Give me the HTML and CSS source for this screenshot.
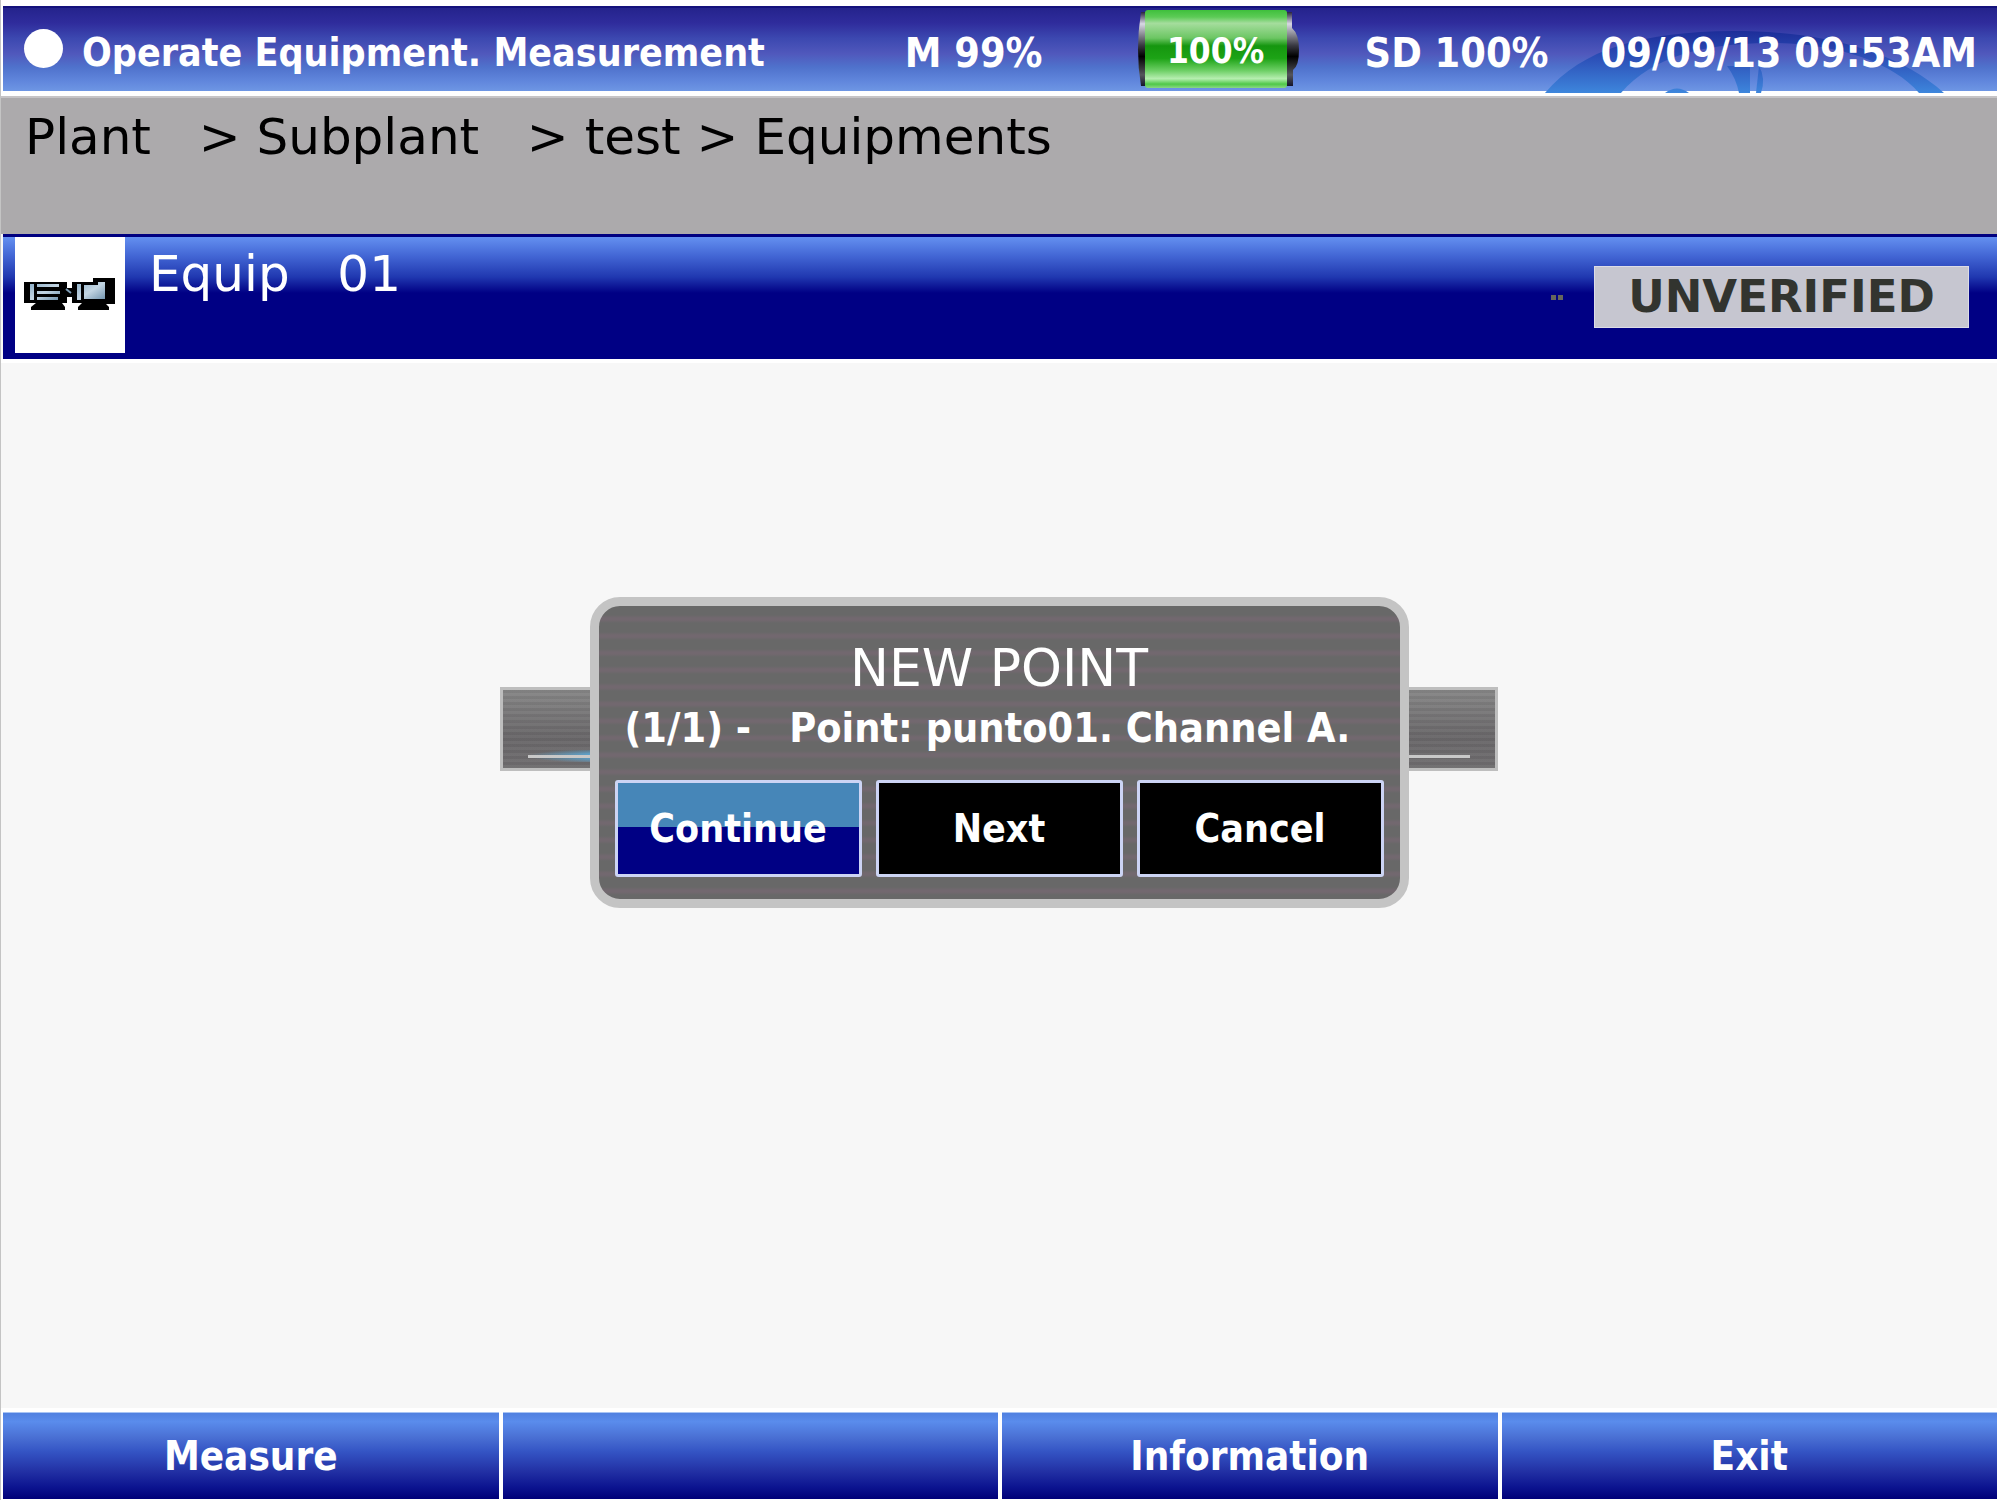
FILE: index.html
```html
<!DOCTYPE html>
<html lang="en">
<head>
<meta charset="utf-8">
<meta name="viewport" content="width=device-width, initial-scale=1">
<title>Operate Equipment. Measurement</title>
<link rel="stylesheet" href="styles.css">
</head>
<body>
<header class="status">
  <svg class="status-arc" viewBox="0 0 410 87" aria-hidden="true">
    <defs>
      <linearGradient id="arc" x1="0" y1="0" x2="0" y2="87" gradientUnits="userSpaceOnUse">
        <stop offset=".28" stop-color="#1c2c98"/>
        <stop offset=".6" stop-color="#2c50b8"/>
        <stop offset="1" stop-color="#3e86dc"/>
      </linearGradient>
    </defs>
    <g fill="url(#arc)">
      <path d="M2 87C40 42 100 26 190 25C280 25 355 45 401 87H376C350 56 290 36 225 37C160 38 110 50 78 87Z"/>
      <path d="M184 60H207V87H196Q193 72 184 60Z"/>
      <path d="M216 60Q223 72 218 87H213Z"/>
      <path d="M122 87Q134 78 146 87Z"/>
    </g>
  </svg>
  <span class="dot"></span>
  <h1 class="status-title">Operate Equipment. Measurement</h1>
  <span class="readout memory">M 99%</span>
  <span class="battery">
    <svg class="battery-body" viewBox="0 0 162 78" aria-hidden="true">
      <defs>
        <linearGradient id="cell" x1="0" y1="0" x2="0" y2="1">
          <stop offset="0" stop-color="#3fc03c"/>
          <stop offset=".09" stop-color="#5ccb56"/>
          <stop offset=".17" stop-color="#a5dd9d"/>
          <stop offset=".36" stop-color="#6cc663"/>
          <stop offset=".46" stop-color="#15960f"/>
          <stop offset=".62" stop-color="#1da316"/>
          <stop offset=".78" stop-color="#6fd067"/>
          <stop offset=".88" stop-color="#b6eeb0"/>
          <stop offset=".95" stop-color="#4fc848"/>
          <stop offset="1" stop-color="#8ad884"/>
        </linearGradient>
        <linearGradient id="cap" x1="0" y1="0" x2="0" y2="1">
          <stop offset="0" stop-color="#2a2440"/>
          <stop offset=".16" stop-color="#d8d8e4"/>
          <stop offset=".45" stop-color="#3a3a42"/>
          <stop offset=".6" stop-color="#000"/>
          <stop offset=".85" stop-color="#55555c"/>
          <stop offset="1" stop-color="#15152a"/>
        </linearGradient>
      </defs>
      <path d="M4 2H14V76H4Q-2 40 4 2Z" fill="url(#cap)"/>
      <path d="M146 2H155V18Q162 24 162 40Q162 56 156 60V76H146Z" fill="url(#cap)"/>
      <rect x="8" y="0" width="142" height="78" rx="3" fill="url(#cell)"/>
    </svg>
    <span class="battery-level">100%</span>
  </span>
  <span class="readout card">SD 100%</span>
  <time class="readout" datetime="2013-09-09T09:53">09/09/13 09:53AM</time>
</header>

<nav class="crumbs" aria-label="Location"><a href="#plant">Plant</a>   &gt; <a href="#subplant">Subplant</a>   &gt; <a href="#test">test</a> &gt; <a href="#equipments">Equipments</a></nav>

<section class="equip">
  <span class="equip-icon">
    <svg viewBox="0 0 92 34" aria-hidden="true">
      <defs>
        <linearGradient id="steel" x1="0" y1="0" x2="1" y2="1">
          <stop offset="0" stop-color="#8fb0c8"/>
          <stop offset=".5" stop-color="#c3d5e2"/>
          <stop offset="1" stop-color="#6f92ac"/>
        </linearGradient>
      </defs>
      <path d="M0 4H43V25H38L41 29V32H7V29L12 25H0Z"/>
      <path d="M48 4H69V0H91V26H82L85 29V32H54V29L58 25H48Z"/>
      <path d="M42 10H49V19H42Z"/>
      <g fill="url(#steel)">
        <path d="M6 6H10V22H6ZM13 6H35V9H13ZM13 13H36V16H13ZM13 19H34V22H13Z"/>
        <path d="M53 6H57V22H53ZM60 7H74V4H81V21H60Z"/>
      </g>
      <path d="M42 11L47 15" stroke="#7e9db5" stroke-width="2"/>
    </svg>
  </span>
  <h2 class="equip-name">Equip   01</h2>
  <span class="marks"><i></i><i></i></span>
  <span class="badge">UNVERIFIED</span>
</section>

<main class="stage">
  <div class="progress"><div class="progress-line"></div></div>
  <div class="dialog" role="dialog" aria-labelledby="dialog-title">
    <h2 class="dialog-title" id="dialog-title">NEW POINT</h2>
    <p class="dialog-text"><span>(1/1) -</span><span>Point: punto01. Channel A.</span></p>
    <div class="dialog-actions">
      <button type="button" class="choice choice-active">Continue</button>
      <button type="button" class="choice">Next</button>
      <button type="button" class="choice">Cancel</button>
    </div>
  </div>
</main>

<footer class="softkeys">
  <button type="button" class="softkey">Measure</button>
  <button type="button" class="softkey" aria-label="Unassigned"></button>
  <button type="button" class="softkey">Information</button>
  <button type="button" class="softkey">Exit</button>
</footer>
</body>
</html>
```
FILE: styles.css
```css
* { box-sizing: border-box; }

body {
  margin: 0;
  min-height: 100vh;
  display: flex;
  flex-direction: column;
  background: #f7f7f7;
  border-left: 1px solid #c4c4c4;
  font-family: "DejaVu Sans Condensed", "DejaVu Sans", sans-serif;
  font-weight: 700;
  font-size: 40px;
  line-height: 48px;
  color: #fff;
}

h1, h2, p { margin: 0; font: inherit; }

button {
  font: inherit;
  color: inherit;
  padding: 0;
  margin: 0;
  cursor: pointer;
}

/* Status bar */
.status {
  position: relative;
  display: flex;
  align-items: center;
  height: 96px;
  padding: 0 20px 0 21px;
  border: solid #fff;
  border-width: 6px 0 5px 2px;
  box-shadow: inset 0 2px #14127c;
  background: linear-gradient(#23228a, #2f2c9c 20%, #3c48b0 38%, #5058bc 56%, #4f72cc 72%, #6086dc 88%, #6e96e4);
}

.status-arc {
  position: absolute;
  right: 44px;
  bottom: -2px;
  width: 410px;
  height: 87px;
}

.status > :not(.status-arc) { position: relative; }

.dot {
  width: 39px;
  height: 39px;
  margin-right: 19px;
  border-radius: 50%;
  background: #fff;
}

.status-title {
  margin-right: auto;
  padding-top: 8px;
  font-size: 39px;
}

.readout {
  padding-top: 8px;
  font-size: 41px;
}

.memory { margin-right: 94px; }
.card { margin-right: 52px; }

.battery {
  display: grid;
  margin-right: 66px;
}

.battery-body, .battery-level { grid-area: 1 / 1; }

.battery-body {
  width: 162px;
  height: 78px;
}

.battery-level {
  align-self: center;
  justify-self: center;
  padding: 4px 4px 0 0;
  font-size: 35px;
}

/* Breadcrumb */
.crumbs {
  min-height: 138px;
  padding: 9px 24px;
  background: #acaaac;
  border-top: 2px solid #c6c4c6;
  white-space: pre;
}

.crumbs, .equip-name {
  font-family: "DejaVu Sans", sans-serif;
  font-weight: 400;
  font-size: 50px;
  line-height: 60px;
  color: #000;
}

.crumbs a {
  color: inherit;
  text-decoration: none;
}

/* Equipment header */
.equip {
  display: flex;
  align-items: center;
  height: 125px;
  margin-left: 2px;
  padding: 0 28px 2px 12px;
  border-top: 3px solid #000080;
  background: linear-gradient(#6490f0, #4468d6 18px, #2038b0 40px, #000084 56px);
}

.equip-icon {
  display: grid;
  place-items: center;
  align-self: flex-start;
  width: 110px;
  height: 116px;
  margin-right: 24px;
  background: #fff;
}

.equip-icon svg {
  width: 92px;
  height: 34px;
}

.equip-name {
  align-self: flex-start;
  margin-right: auto;
  padding-top: 7px;
  color: #fff;
  white-space: pre;
}

.marks {
  display: flex;
  gap: 2px;
  margin-right: 31px;
}

.marks i {
  width: 5px;
  height: 5px;
  background: #66665c;
}

.badge {
  width: 375px;
  padding: 6px 0;
  border: 1px solid #dcdce6;
  background: #c6c6d0;
  color: #32342f;
  font-family: "DejaVu Sans", sans-serif;
  font-size: 45px;
  line-height: 48px;
  text-align: center;
}

/* Work area */
.stage {
  flex: 1;
  display: grid;
  justify-items: center;
  align-items: start;
  border-top: 4px solid #fff;
}

.progress, .dialog { grid-area: 1 / 1; }

.progress {
  width: 50%;
  height: 84px;
  margin-top: 324px;
  padding: 60px 25px 0;
  border: 3px solid #bebebe;
  background:
    repeating-linear-gradient(#6460641a 0 3px, #ffffff0d 3px 6px),
    linear-gradient(#848484, #666466 60%, #6c6a6c);
}

.progress-line {
  height: 12px;
  background:
    linear-gradient(#c8c8c8, #c8c8c8) center / 100% 3px no-repeat,
    radial-gradient(ellipse 110px 8px at 110px 50%, #58a8d8 40%, #58a8d800);
}

.dialog {
  width: 819px;
  margin-top: 234px;
  padding: 32px 16px 22px;
  border: 9px solid #c4c4c4;
  border-radius: 30px;
  background: repeating-linear-gradient(#686868 0 9px, #72686f 12px 14px, #686868 17px);
}

.dialog-title {
  font-family: "DejaVu Sans", sans-serif;
  font-weight: 400;
  font-size: 52px;
  line-height: 60px;
  text-align: center;
}

.dialog-text {
  display: flex;
  gap: 38px;
  padding: 6px 10px 28px;
  font-size: 41px;
}

.dialog-actions {
  display: grid;
  grid-template-columns: repeat(3, 1fr);
  gap: 14px;
}

.choice {
  height: 97px;
  border: 3px solid #ccd4f4;
  border-radius: 3px;
  background: #000;
  font-size: 39px;
}

.choice-active { background: linear-gradient(#4686b8 48%, #000084 48%); }

/* Soft keys */
.softkeys {
  display: grid;
  grid-template-columns: repeat(4, 1fr);
  gap: 4px;
  padding: 4px 0 1px 2px;
  background: #fff;
}

.softkey {
  height: 87px;
  border: 0;
  border-top: 1px solid #a8c4f4;
  background: linear-gradient(#5080e0, #5a8cec 10%, #4a70d4 28%, #3454c4 45%, #2230a4 68%, #0c1490 86%, #000078);
}
```
